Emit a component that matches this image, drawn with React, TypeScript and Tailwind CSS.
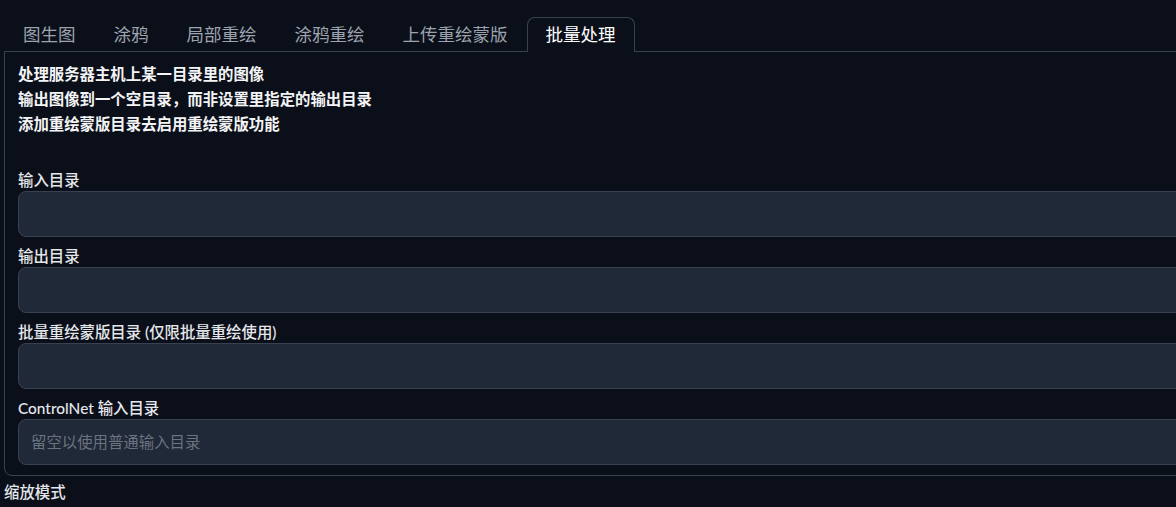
import React from "react";

const tabs = ["图生图", "涂鸦", "局部重绘", "涂鸦重绘", "上传重绘蒙版", "批量处理"];
const selectedTab = 5;

const fields = [
  { label: "输入目录", placeholder: "" },
  { label: "输出目录", placeholder: "" },
  { label: "批量重绘蒙版目录 (仅限批量重绘使用)", placeholder: "" },
  { label: "ControlNet 输入目录", placeholder: "留空以使用普通输入目录" },
];

const font = "font-['Lato','Noto_Sans_CJK_SC',sans-serif]";

export default function App() {
  return (
    <div className={`min-h-screen w-full overflow-hidden bg-[#0b0f19] text-[#f3f4f6] ${font}`}>
      <div className="w-[1220px] pl-1">
        {/* tab bar */}
        <div className="flex pt-[17px]">
          {tabs.map((t, i) =>
            i === selectedTab ? (
              <button
                key={t}
                className="relative z-10 -mb-px h-[35px] rounded-t-lg border border-b-0 border-[#374151] bg-[#0b0f19] px-[18px] text-[17.5px] leading-[22px] text-white"
              >
                {t}
              </button>
            ) : (
              <button
                key={t}
                className="-mb-px h-[35px] border border-transparent px-[18px] text-[17.5px] leading-[22px] text-[#9ca3af]"
              >
                {t}
              </button>
            )
          )}
        </div>

        {/* panel */}
        <div className="rounded-b-lg border border-[#374151] px-[13px] pt-[10px] pb-[10px]">
          <div className="text-[15.4px] leading-[25px] font-semibold text-[#f3f4f6]">
            <p>处理服务器主机上某一目录里的图像</p>
            <p>输出图像到一个空目录，而非设置里指定的输出目录</p>
            <p>添加重绘蒙版目录去启用重绘蒙版功能</p>
          </div>

          <div className="mt-[33px] flex flex-col gap-[9px]">
            {fields.map((f) => (
              <label key={f.label} className="flex flex-col">
                <span className="mb-px h-[20px] text-[15.4px] leading-[20px] font-medium text-[#e5e7eb]">
                  {f.label}
                </span>
                <input
                  type="text"
                  placeholder={f.placeholder}
                  className="h-[46px] w-full rounded-lg border border-[#374151] bg-[#1f2937] px-3 text-[15.4px] text-[#f3f4f6] outline-none placeholder:text-[#6b7280]"
                />
              </label>
            ))}
          </div>
        </div>

        <div className="mt-[6px] text-[15.4px] leading-[20px] font-medium text-[#e5e7eb]">缩放模式</div>
      </div>
    </div>
  );
}
